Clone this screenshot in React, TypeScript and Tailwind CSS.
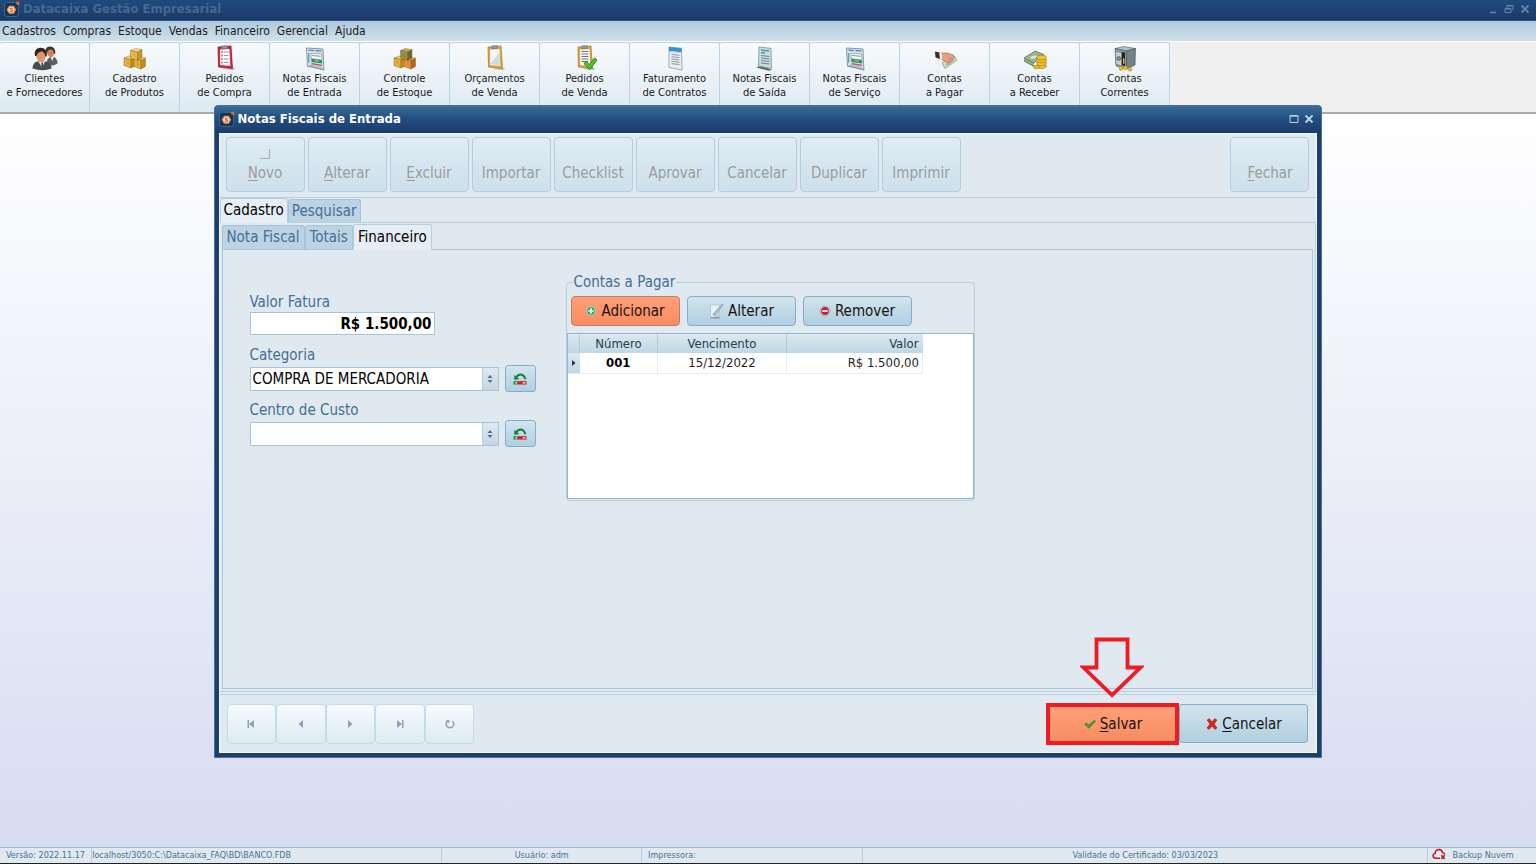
import type { ReactNode } from "react";

/* ---------- toolbar drawings (28 x 28) ---------- */

function PeopleIcon() {
  return (
    <>
      <path d="M15 20 Q16 14 19.500 13 L23 13 Q26.500 14.500 26.500 19.500 Q22 22.500 16 21.500Z" fill="#5d6063" />
      <path d="M19.500 13 L21.200 17 L22.800 13Z" fill="#f2f2f2" />
      <path d="M15.500 7.500 Q15.500 3.500 19.500 3.500 Q23.500 3.500 23.200 8 Q23 12.500 20 13.500 Q16.500 12.500 15.500 7.500Z" fill="#cf8259" />
      <path d="M14.800 8.500 Q13.500 3 19 2.500 Q24.800 2.500 24.200 10 L22.800 9.500 Q22.500 6 20.500 5.500 Q17 5 16 8.500Z" fill="#3a3330" />
      <path d="M1.500 24.500 Q2 18.500 6 17.500 L14.500 17.500 Q20.500 19 20.500 24.500 Q12 28 1.500 24.500Z" fill="#4a4d50" />
      <path d="M7.500 17.500 L11 23.500 L14 17.500Z" fill="#f6f6f6" />
      <path d="M10.300 18.500 L12 18.500 L12 24.500 L10.600 24Z" fill="#2f4a70" />
      <path d="M4.800 11 Q4.800 5.500 9.800 5.500 Q15 5.500 14.800 11.500 Q14.500 17 10.500 18.500 Q6 17.500 4.800 11Z" fill="#e09468" />
      <path d="M4 12 Q2.500 4.500 9 3.800 Q16.500 3.500 15.800 12.800 L14.300 12 Q14 8.500 11.500 7.500 Q7 7 5.400 12Z" fill="#2a2523" />
    </>
  );
}

function Cube({ x, y, top, left, right }: { x: number; y: number; top: string; left: string; right: string }) {
  return (
    <g transform={`translate(${x} ${y})`} stroke="#7d5a10" strokeWidth="0.4">
      <path d="M0 2 L5 0 L11.500 1.200 L7 3.500Z" fill={top} />
      <path d="M0 2 L7 3.500 L7 12 L0 9.500Z" fill={left} />
      <path d="M7 3.500 L11.500 1.200 L11.500 9.500 L7 12Z" fill={right} />
      <path d="M1.200 3.600 L5.800 4.600 L5.800 10.200 L1.200 8.600Z" fill="none" stroke={top} />
    </g>
  );
}

function BoxesIcon() {
  return (
    <>
      <Cube x={3} y={12} top="#f6d77a" left="#dba52e" right="#c48d20" />
      <Cube x={13} y={13} top="#f6d77a" left="#dba52e" right="#c48d20" />
      <Cube x={9.5} y={4.500} top="#f8df90" left="#e2b03a" right="#c9962a" />
    </>
  );
}

function StockIcon() {
  return (
    <>
      <Cube x={3} y={12} top="#f3cf6a" left="#dba52e" right="#c48d20" />
      <Cube x={13} y={13} top="#efae6b" left="#de8a38" right="#bb631a" />
      <Cube x={9.5} y={4.500} top="#b5ad6a" left="#8f8742" right="#6d662d" />
    </>
  );
}

function Clipboard({ frame, edge, children }: { frame: string; edge: string; children?: ReactNode }) {
  return (
    <>
      <path d="M11 25 L23 26.200 L24 24.500 L20 23Z" fill="#a9adb0" opacity="0.7" />
      <path d="M7 3 L20 2 L21.500 24.500 L7.500 23Z" fill={frame} stroke={edge} strokeWidth="0.7" />
      <path d="M9 5.500 L18.400 5 L19.400 22 L9.200 21Z" fill="#f3f7f9" />
      <path d="M11 1.800 L16 1.500 L16.800 4.600 L10.600 4.900Z" fill="#8e979d" stroke="#5f666b" strokeWidth="0.400" />
      {children}
    </>
  );
}

function PurchaseOrderIcon() {
  return (
    <Clipboard frame="#d3263a" edge="#98101f">
      {[8, 11.5, 15, 18.5].map((y) => (
        <g key={y}>
          <rect x="10.200" y={y - 0.8} width="1.800" height="1.600" fill="#df5a67" />
          <path d={`M13 ${y} H17.500`} stroke="#8b8f96" strokeWidth="0.900" />
        </g>
      ))}
    </Clipboard>
  );
}

function BudgetIcon() {
  return (
    <Clipboard frame="#e0a63b" edge="#a8741a">
      <path d="M9.200 20 L18.500 8 L19.200 21.500Z" fill="#cfdce3" />
    </Clipboard>
  );
}

function SalesOrderIcon() {
  return (
    <Clipboard frame="#e0a63b" edge="#a8741a">
      {[7.5, 10, 12.5, 15, 17.5].map((y) => (
        <path key={y} d={`M10.400 ${y} H17.300`} stroke="#6f777d" strokeWidth="1" />
      ))}
      <path d="M13 19.500 L15.500 17.500 L18.300 20.500 L23.500 14 L26 16 L18.500 25.500Z" fill="#4cc629" stroke="#1f7d10" strokeWidth="0.900" />
    </Clipboard>
  );
}

function InvoiceIcon() {
  return (
    <>
      <path d="M6 22.500 L23 26.500 L23.500 25 L8 21Z" fill="#8e979d" />
      <path d="M5.500 4 L22 5 L22.800 25.500 L6.500 21.800Z" fill="#d3e1e9" stroke="#7b929f" strokeWidth="0.900" />
      <path d="M7.500 6.200 L13 6.500 M14.500 6.600 L20.500 7" stroke="#4f7fa6" strokeWidth="1.200" />
      <path d="M7.700 9 V18.500" stroke="#6fa0c0" strokeWidth="1.400" />
      <path d="M10 9.300 L20.500 10 L21 16 L10.300 14.600Z" fill="#f6f8f9" stroke="#6c7a85" strokeWidth="0.500" />
      <path d="M11 11.500 L19.500 12.300" stroke="#7b8a95" strokeWidth="0.900" />
      <path d="M10.300 14.800 L21 16.200 L21.200 19.600 L10.500 18Z" fill="#279553" />
      <path d="M13.500 16.600 L18 17.300" stroke="#9fdab6" strokeWidth="0.900" />
      <path d="M10.600 19.600 L21 21.400" stroke="#cf4646" strokeWidth="1.300" />
      <path d="M9 21 L20.500 23.500" stroke="#89a1ae" strokeWidth="0.800" />
    </>
  );
}

function ContractIcon() {
  return (
    <>
      <path d="M8 3 L20.500 4.300 L21 26 L8 23.500Z" fill="#e9eef2" stroke="#8d98a1" strokeWidth="0.800" />
      <path d="M8 3 L20.500 4.300 L20.600 8.200 L8 7Z" fill="#2f95d3" />
      <path d="M8.400 7.600 L20.300 8.800" stroke="#9ed0ee" strokeWidth="0.800" />
      {[10.5, 12.8, 15.1, 17.4, 19.7].map((y) => (
        <path key={y} d={`M10.500 ${y} L18.500 ${y + 0.8}`} stroke="#8e98a2" strokeWidth="1" />
      ))}
    </>
  );
}

function OutgoingInvoiceIcon() {
  return (
    <>
      <path d="M5 23.500 L18 26.800 L21 25.500 L9 22Z" fill="#5e666b" />
      <path d="M8 3 L20 4.400 L20.500 24.300 L7.500 22Z" fill="#c9dce0" stroke="#78909a" strokeWidth="0.800" />
      <path d="M10 6 L18 7 M10 8.500 L14 9" stroke="#3e9a8e" strokeWidth="1.300" />
      {[11.5, 14, 16.5, 19].map((y) => (
        <path key={y} d={`M10 ${y} L18.500 ${y + 1}`} stroke="#6e8b95" strokeWidth="1" />
      ))}
    </>
  );
}

function PayIcon() {
  return (
    <>
      <path d="M11 19 L22 10.500 L26 16 L14 24.500Z" fill="#cddcca" stroke="#79917a" strokeWidth="0.700" />
      <path d="M14.500 20 L22 14 L23.500 16.500 L16 22Z" fill="#a3b9a2" />
      <path d="M9 9 L16 9 Q21 9.500 23.500 13.500 L21.500 15.500 L17.500 14 L20 18 Q18 19.500 15.500 18 L10 15Z" fill="#e6a27e" stroke="#a9603c" strokeWidth="0.600" />
      <path d="M4 7.500 L8.500 8.500 L9 15 L4.500 13.500Z" fill="#35302e" />
      <path d="M8.500 8.500 L10.500 8.800 L11 15.300 L9 14.800Z" fill="#f4f4f4" />
    </>
  );
}

function ReceiveIcon() {
  return (
    <>
      <path d="M3 14 L14 7 L23 10.500 L13 19Z" fill="#9db394" stroke="#4f6a4b" strokeWidth="0.700" />
      <path d="M3 14 L13 19 L13 23 L3 17.500Z" fill="#70896a" />
      <path d="M9 13.500 Q13 10.500 17 12.200 Q14.500 15 10.500 15.200Z" fill="#dbe6d5" />
      <path d="M3.200 15.500 L13 20.700" stroke="#cfdcca" strokeWidth="0.700" />
      {[22, 19.2, 16.4, 13.6].map((y) => (
        <ellipse key={y} cx="20.500" cy={y} rx="4.800" ry="2.400" fill="#f2c230" stroke="#a67a0d" strokeWidth="0.700" />
      ))}
      <ellipse cx="15.500" cy="23" rx="3" ry="1.800" fill="#e8b92b" stroke="#a67a0d" strokeWidth="0.600" />
    </>
  );
}

function SafeIcon() {
  return (
    <>
      <path d="M4 4.500 L13 2.500 L24.500 4.500 L15.500 7Z" fill="#b4c0c7" stroke="#505a60" strokeWidth="0.600" />
      <path d="M4 4.500 L15.500 7 L15.500 25 L5 22Z" fill="#8c999f" stroke="#505a60" strokeWidth="0.600" />
      <path d="M15.500 7 L24.500 4.500 L24 21 L15.500 25Z" fill="#75828a" stroke="#3f484d" strokeWidth="0.600" />
      <path d="M10.500 8 L14 8.600 L14 22 L10.500 21Z" fill="#1d1f20" />
      <path d="M12 14 L13.500 14.500 L13.500 20 L12 19.500Z" fill="#e8b92b" />
      <path d="M4.500 7.500 L10.500 8.500 L10.500 22 L5 20Z" fill="#c5d0d6" stroke="#5d686e" strokeWidth="0.500" />
      <circle cx="7.700" cy="14.500" r="1.900" fill="#8a979e" stroke="#48525a" strokeWidth="0.700" />
      <circle cx="10" cy="24.500" r="1.900" fill="#f0c030" stroke="#a67a0d" strokeWidth="0.500" />
      <circle cx="14.500" cy="23.800" r="1.900" fill="#f0c030" stroke="#a67a0d" strokeWidth="0.500" />
      <circle cx="19" cy="25.200" r="1.900" fill="#f0c030" stroke="#a67a0d" strokeWidth="0.500" />
    </>
  );
}

/* ---------- small drawings ---------- */

function AppLogo() {
  return (
    <svg viewBox="0 0 16 16" className="h-4 w-4 shrink-0" aria-hidden="true">
      <rect x="0.500" y="1.500" width="14" height="14" rx="2.500" fill="#123656" stroke="#3d6684" />
      <path d="M11.800 1 L15.500 0.500 L15 4.200 L12.400 3.600Z" fill="#e2622a" />
      <path d="M5 4.800 L9.800 4.800 L12.200 8.800 L9.800 12.800 L5 12.800 L2.600 8.800Z" fill="#f08a52" />
      <circle cx="7.400" cy="8.800" r="3" fill="#fbe3d3" />
      <path d="M8.900 7.600 Q7.400 6.400 6.300 7.500 Q6 8.600 7.400 8.800 Q8.900 9.100 8.500 10.100 Q7.300 11.200 5.900 10" fill="none" stroke="#e2622a" strokeWidth="1.100" />
    </svg>
  );
}

function PlusIcon() {
  return (
    <svg viewBox="0 0 12 12" className="h-3 w-3" aria-hidden="true">
      <circle cx="6" cy="6" r="5" fill="#e3e7e2" stroke="#a2a79f" strokeWidth="0.800" />
      <circle cx="6" cy="6" r="3.900" fill="#3fa648" />
      <path d="M6 3.200 V8.800 M3.200 6 H8.800" stroke="#fff" strokeWidth="1.700" />
    </svg>
  );
}

function MinusIcon() {
  return (
    <svg viewBox="0 0 12 12" className="h-3 w-3" aria-hidden="true">
      <circle cx="6" cy="6" r="5" fill="#d9dfe3" stroke="#98a3aa" strokeWidth="0.800" />
      <circle cx="6" cy="6" r="3.900" fill="#cc1f3d" />
      <path d="M3.300 6 H8.700" stroke="#fff" strokeWidth="1.700" />
    </svg>
  );
}

function EditIcon() {
  return (
    <svg viewBox="0 0 16 16" className="h-4 w-4" aria-hidden="true">
      <path d="M2.500 2 H11.500 V14.500 H2.500Z" fill="#e8f1f5" stroke="#a5b8c2" strokeWidth="0.600" />
      <path d="M5 14.500 L11.500 6 V14.500Z" fill="#bfced6" />
      <path d="M2.500 14.800 H11.800" stroke="#6f838e" />
      <path d="M14 1.200 L15.200 2.200 L7 11.500 L5 12.500 L5.700 10.400Z" fill="#b5c3cb" stroke="#7b8c96" strokeWidth="0.600" />
    </svg>
  );
}

function SwapIcon() {
  return (
    <svg viewBox="0 0 14 14" className="h-3.5 w-3.5" aria-hidden="true">
      <path d="M2.800 6 Q4.500 2.600 8 2.600 Q11 3 12.400 7.200" fill="none" stroke="#15803a" strokeWidth="2" />
      <path d="M1.200 3 L1.300 7.800 L6.500 7.300Z" fill="#15803a" />
      <rect x="0.500" y="9.200" width="4" height="3.300" fill="#1f8a35" />
      <rect x="4.500" y="9.200" width="9" height="3.300" fill="#c91f1f" />
      <rect x="9.500" y="10.200" width="3" height="1.300" fill="#f4d9d9" />
      <rect x="2" y="10.200" width="2" height="1.300" fill="#bfe5c5" />
    </svg>
  );
}

function CheckIcon() {
  return (
    <svg viewBox="0 0 12 12" className="h-3 w-3" aria-hidden="true">
      <path d="M0.800 6.200 L2.800 5.200 L4.600 7.200 L10.400 2.400 L11.400 3.200 L4.800 10.200Z" fill="#3fae2f" stroke="#1d6e16" strokeWidth="0.700" />
    </svg>
  );
}

function CrossIcon() {
  return (
    <svg viewBox="0 0 12 12" className="h-3 w-3" aria-hidden="true">
      <path d="M1.200 2 L3.400 0.800 L6 4 L8.800 0.800 L10.800 2 L8 6 L11 10 L8.800 11.200 L6 8 L3.200 11.200 L1 10 L4 6Z" fill="#e02410" stroke="#8d1208" strokeWidth="0.600" />
    </svg>
  );
}

function CloudErrorIcon() {
  return (
    <svg viewBox="0 0 14 12" className="-mt-1 h-3 w-3.5" aria-hidden="true">
      <path d="M8 10.200 H3.200 Q1 10 1 7.600 Q1.200 5.600 3.200 5.300 Q3.600 1.600 7 1.500 Q10 1.600 10.600 4.800 Q12.500 5 12.800 6.600" fill="none" stroke="#c4161c" strokeWidth="1.500" />
      <path d="M9.300 7.300 L12.700 10.900 M12.700 7.300 L9.300 10.900" stroke="#c4161c" strokeWidth="1.600" />
    </svg>
  );
}

function NavGlyph({ d }: { d: string }) {
  return (
    <svg viewBox="0 0 10 10" className="h-2.5 w-2.5" aria-hidden="true">
      <path d={d} fill="#8fa3b8" />
    </svg>
  );
}

function RefreshGlyph() {
  return (
    <svg viewBox="0 0 10 10" className="h-2.5 w-2.5" aria-hidden="true">
      <path d="M7.400 2.200 Q9.600 4.200 8.300 6.800 Q7 8.800 4.800 8.700 Q2.200 8.600 1.300 6 Q0.900 3.600 2.600 2.200" fill="none" stroke="#8fa3b8" strokeWidth="1.500" />
      <path d="M0.800 1 H4.400 V4.400Z" fill="#8fa3b8" />
    </svg>
  );
}

/* ---------- data ---------- */

const menus = ["Cadastros", "Compras", "Estoque", "Vendas", "Financeiro", "Gerencial", "Ajuda"];

const shortcuts: { lines: [string, string]; icon: ReactNode }[] = [
  { lines: ["Clientes", "e Fornecedores"], icon: <PeopleIcon /> },
  { lines: ["Cadastro", "de Produtos"], icon: <BoxesIcon /> },
  { lines: ["Pedidos", "de Compra"], icon: <PurchaseOrderIcon /> },
  { lines: ["Notas Fiscais", "de Entrada"], icon: <InvoiceIcon /> },
  { lines: ["Controle", "de Estoque"], icon: <StockIcon /> },
  { lines: ["Orçamentos", "de Venda"], icon: <BudgetIcon /> },
  { lines: ["Pedidos", "de Venda"], icon: <SalesOrderIcon /> },
  { lines: ["Faturamento", "de Contratos"], icon: <ContractIcon /> },
  { lines: ["Notas Fiscais", "de Saída"], icon: <OutgoingInvoiceIcon /> },
  { lines: ["Notas Fiscais", "de Serviço"], icon: <InvoiceIcon /> },
  { lines: ["Contas", "a Pagar"], icon: <PayIcon /> },
  { lines: ["Contas", "a Receber"], icon: <ReceiveIcon /> },
  { lines: ["Contas", "Correntes"], icon: <SafeIcon /> },
];

const actions: { label: string; key: boolean }[] = [
  { label: "Novo", key: true },
  { label: "Alterar", key: true },
  { label: "Excluir", key: true },
  { label: "Importar", key: false },
  { label: "Checklist", key: false },
  { label: "Aprovar", key: false },
  { label: "Cancelar", key: false },
  { label: "Duplicar", key: false },
  { label: "Imprimir", key: false },
];

const navButtons: { name: string; glyph: ReactNode }[] = [
  { name: "Primeiro", glyph: <NavGlyph d="M1.500 1 H3 V9 H1.500Z M8 1 V9 L3 5Z" /> },
  { name: "Anterior", glyph: <NavGlyph d="M7 1 V9 L2.500 5Z" /> },
  { name: "Próximo", glyph: <NavGlyph d="M3 1 V9 L7.500 5Z" /> },
  { name: "Último", glyph: <NavGlyph d="M7 1 H8.500 V9 H7Z M2 1 V9 L7 5Z" /> },
  { name: "Atualizar", glyph: <RefreshGlyph /> },
];

/* ---------- pieces ---------- */

function AccessLabel({ text, underline }: { text: string; underline: boolean }) {
  if (!underline) return <span>{text}</span>;
  return (
    <span>
      <span className="underline underline-offset-2">{text[0]}</span>
      {text.slice(1)}
    </span>
  );
}

function ActionButton({ label, underline, children }: { label: string; underline: boolean; children?: ReactNode }) {
  return (
    <button
      type="button"
      disabled
      className="flex h-[55px] w-[79px] flex-col items-center justify-end rounded-[4px] border border-[#b3cede] bg-gradient-to-b from-[#dfecf3] to-[#cde0ec] pb-2 text-[15px] leading-5 text-[#9a9c9e]"
    >
      {children}
      <AccessLabel text={label} underline={underline} />
    </button>
  );
}

function GridButton({ label, primary, children }: { label: string; primary?: boolean; children: ReactNode }) {
  return (
    <button
      type="button"
      className={
        primary
          ? "flex h-[30px] w-[109px] items-center justify-center gap-1 rounded-[4px] border border-[#b9806c] bg-gradient-to-b from-[#ff9f78] to-[#fb8b60] text-[15px] leading-5 text-[#141414]"
          : "flex h-[30px] w-[109px] items-center justify-center gap-1 rounded-[4px] border border-[#84add0] bg-gradient-to-b from-[#d3e4ee] to-[#b0cfe0] text-[15px] leading-5 text-[#141414]"
      }
    >
      {children}
      <span>{label}</span>
    </button>
  );
}

function ComboField({ id, label, value }: { id: string; label: string; value: string }) {
  return (
    <div>
      <label htmlFor={id} className="block text-[15px] leading-[19px] text-[#426f97]">
        {label}
      </label>
      <div className="flex items-center gap-1.5">
        <div className="relative w-[249px]">
          <select
            id={id}
            defaultValue={value}
            className="block h-6 w-full appearance-none border border-[#a5c5dc] bg-white pl-0.5 text-[15px] leading-5 text-black"
          >
            <option>{value}</option>
          </select>
          <span className="pointer-events-none absolute inset-y-px right-px flex w-4 items-center justify-center border-l border-[#b8cfdf] bg-gradient-to-b from-[#dfe9f0] to-[#c6d6e2]">
            <svg viewBox="0 0 6 8" className="h-2 w-1.5" aria-hidden="true">
              <path d="M3 0 L5.500 3 H0.500Z M3 8 L5.500 5 H0.500Z" fill="#3f72a0" />
            </svg>
          </span>
        </div>
        <button
          type="button"
          aria-label={`Limpar ${label}`}
          className="flex h-[27px] w-[31px] items-center justify-center rounded-[3px] border border-[#84add0] bg-gradient-to-b from-[#d3e4ee] to-[#b0cfe0]"
        >
          <SwapIcon />
        </button>
      </div>
    </div>
  );
}

function WindowControls({ full, color }: { full: boolean; color: string }) {
  return (
    <div className={full ? "flex items-center gap-1.5 pr-1.5" : "flex items-center gap-[5px] pr-[3px]"}>
      {full && (
        <button type="button" aria-label="Minimizar">
          <svg viewBox="0 0 10 10" className="h-2.5 w-2.5" aria-hidden="true">
            <path d="M2 8.500 H8" stroke={color} strokeWidth="1.500" />
          </svg>
        </button>
      )}
      <button type="button" aria-label={full ? "Restaurar" : "Maximizar"}>
        <svg viewBox="0 0 10 10" className="h-2.5 w-2.5" aria-hidden="true">
          {full ? (
            <path d="M1 4.500 H7 V8.500 H1Z M1 5 H7 M3 4 V1.500 H9 V5.500 H7.500 M3 2 H9" fill="none" stroke={color} />
          ) : (
            <path d="M1 1.500 H9 V8.500 H1Z M1 2.200 H9" fill="none" stroke={color} />
          )}
        </svg>
      </button>
      <button type="button" aria-label="Fechar janela">
        <svg viewBox="0 0 10 10" className="h-2.5 w-2.5" aria-hidden="true">
          <path d="M1.500 1.500 L8.500 8.500 M8.500 1.500 L1.500 8.500" stroke={color} strokeWidth="1.900" />
        </svg>
      </button>
    </div>
  );
}

function PayablesBox() {
  return (
    <fieldset className="ml-[30px] mt-[22px] w-[409px] min-w-0 rounded-[4px] border border-[#b5cfe1] pb-px">
      <legend className="ml-1.5 px-px text-[15px] leading-5 text-[#426f97]">Contas a Pagar</legend>
      <div className="flex h-[41px] gap-[7px] pl-1 pt-1">
        <GridButton label="Adicionar" primary>
          <PlusIcon />
        </GridButton>
        <GridButton label="Alterar">
          <EditIcon />
        </GridButton>
        <GridButton label="Remover">
          <MinusIcon />
        </GridButton>
      </div>
      <div className="h-[166px] border border-[#8fb6d3] bg-white">
        <table className="w-[355px] table-fixed border-collapse text-[13px] leading-[18px] text-[#1f1f1f]">
          <colgroup>
            <col className="w-3" />
            <col className="w-[78px]" />
            <col className="w-[129px]" />
            <col className="w-[136px]" />
          </colgroup>
          <thead>
            <tr className="h-[19px] bg-gradient-to-b from-[#dbe8f0] to-[#bfd7e5] text-[#2a3b49]">
              <th className="border-r border-[#b0cadb] p-0" aria-label="Linha atual" />
              <th className="border-r border-[#b0cadb] p-0 text-center font-normal">Número</th>
              <th className="border-r border-[#b0cadb] p-0 text-center font-normal">Vencimento</th>
              <th className="p-0 pr-1 text-right font-normal">Valor</th>
            </tr>
          </thead>
          <tbody>
            <tr className="h-5 border-b border-[#e2edf4]">
              <td className="bg-gradient-to-b from-[#dbe8f0] to-[#bfd7e5] p-0">
                <svg viewBox="0 0 4 6" className="mx-auto h-1.5 w-1" aria-hidden="true">
                  <path d="M0 0 L3.500 3 L0 6Z" fill="#123a63" />
                </svg>
              </td>
              <td className="border-r border-[#e2edf4] p-0 text-center font-bold text-black">001</td>
              <td className="border-r border-[#e2edf4] p-0 text-center">15/12/2022</td>
              <td className="border-r border-[#e2edf4] p-0 pr-[3px] text-right">R$ 1.500,00</td>
            </tr>
          </tbody>
        </table>
      </div>
    </fieldset>
  );
}

function InvoiceWindow() {
  return (
    <section
      aria-label="Notas Fiscais de Entrada"
      className="-mt-[9px] flex w-[72.2%] flex-col rounded-t-[4px] border border-[#4d7299] bg-[#1b3f6f] px-1 pb-1"
    >
      <header className="-mx-1 flex h-[27px] items-center justify-between rounded-t-[3px] bg-gradient-to-b from-[#3a6d99] via-[#234c7f] to-[#1b3c6b] px-1 pb-0.5">
        <div className="flex items-center gap-[3px]">
          <AppLogo />
          <h2 className="text-[13px] font-bold leading-4 text-white">Notas Fiscais de Entrada</h2>
        </div>
        <WindowControls full={false} color="#b9d3e5" />
      </header>

      <div className="flex flex-1 flex-col border border-[#f3f7fa] bg-[#e1e9f0]">
        <div className="flex justify-between border-b border-[#b5cfe1] pb-[5px] pl-1.5 pr-[7px] pt-[3px]">
          <div className="flex gap-[3px]">
            {actions.map((a) => (
              <ActionButton key={a.label} label={a.label} underline={a.key}>
                {a.label === "Novo" && <span className="mb-1 h-2.5 w-2.5 border-b border-r border-[#a9adb0]" />}
              </ActionButton>
            ))}
          </div>
          <ActionButton label="Fechar" underline />
        </div>

        <div className="flex h-[25px] items-end border-b border-[#b5cfe1] text-[15px] leading-5" role="tablist">
          <button type="button" role="tab" aria-selected="true" className="z-10 -mb-px h-[25px] rounded-t-[3px] border border-b-0 border-[#b5cfe1] bg-[#e6edf4] px-[3px] pb-0.5 text-black">
            Cadastro
          </button>
          <button type="button" role="tab" aria-selected="false" className="h-[23px] rounded-t-[3px] border border-b-0 border-[#a3c4da] bg-[#bdd3e2] px-[3px] pb-px text-[#426f97]">
            Pesquisar
          </button>
        </div>

        <div className="flex flex-1 flex-col border-b border-r border-[#b5cfe1] pb-0.5 pl-0.5 pt-[2px]">
          <div className="flex h-6 items-end text-[15px] leading-5" role="tablist">
            <button type="button" role="tab" aria-selected="false" className="h-6 rounded-t-[3px] border border-b-0 border-[#a3c4da] bg-[#bdd3e2] px-1 pb-px text-[#426f97]">
              Nota Fiscal
            </button>
            <button type="button" role="tab" aria-selected="false" className="h-6 rounded-t-[3px] border border-b-0 border-[#a3c4da] bg-[#bdd3e2] px-1 pb-px text-[#426f97]">
              Totais
            </button>
            <button type="button" role="tab" aria-selected="true" className="z-10 -mb-px h-[26px] rounded-t-[3px] border border-b-0 border-[#b5cfe1] bg-[#e6edf4] px-1 pb-0.5 text-black">
              Financeiro
            </button>
          </div>

          <div className="mr-0.5 flex flex-1 items-start border border-[#a9c6db] pl-[27px]">
            <div className="pt-[43px]">
              <label htmlFor="valor" className="block text-[15px] leading-[19px] text-[#426f97]">
                Valor Fatura
              </label>
              <input
                id="valor"
                defaultValue="R$ 1.500,00"
                className="block h-[23px] w-[185px] border border-[#a5c5dc] bg-white pr-0.5 text-right text-[15px] font-bold leading-5 text-black"
              />
              <div className="flex flex-col gap-[9px] pt-[11px]">
                <ComboField id="categoria" label="Categoria" value="COMPRA DE MERCADORIA" />
                <ComboField id="centro" label="Centro de Custo" value="" />
              </div>
            </div>
            <PayablesBox />
          </div>
        </div>

        <footer className="mt-0.5 flex items-start justify-between border-t border-[#b5cfe1] pb-[7px] pl-[7px] pr-2 pt-[9px]">
          <div className="flex w-[248px]">
            {navButtons.map((b) => (
              <button
                key={b.name}
                type="button"
                disabled
                aria-label={b.name}
                className="flex h-10 flex-1 items-center justify-center rounded-[4px] border border-[#c3dcea] bg-gradient-to-b from-[#f7fafc] to-[#dcebf2]"
              >
                {b.glyph}
              </button>
            ))}
          </div>
          <div className="flex">
            <div className="relative">
              <button
                type="button"
                className="-mt-px flex h-[42px] w-[133px] items-center justify-center gap-1 border-4 border-[#ed1c24] bg-gradient-to-b from-[#ff9f78] to-[#f88d61] text-[15px] leading-5 text-[#141414]"
              >
                <CheckIcon />
                <AccessLabel text="Salvar" underline />
              </button>
              <svg viewBox="0 0 64 61" className="absolute bottom-full left-[34px] mb-1.5 h-[61px] w-16" aria-hidden="true">
                <path d="M16.500 2.500 H47.500 V30.500 H60.500 L32 58 L3.500 30.500 H16.500Z" fill="none" stroke="#ed1c24" strokeWidth="3.800" />
              </svg>
            </div>
            <button
              type="button"
              className="flex h-[39px] w-[129px] items-center justify-center gap-1 rounded-[3px] border border-[#84add0] bg-gradient-to-b from-[#d3e4ee] to-[#b0cfe0] text-[15px] leading-5 text-[#141414]"
            >
              <CrossIcon />
              <AccessLabel text="Cancelar" underline />
            </button>
          </div>
        </footer>
      </div>
    </section>
  );
}

export default function App() {
  return (
    <div className="flex min-h-screen flex-col font-['DejaVu_Sans_Condensed','Noto_Sans',sans-serif]">
      <header className="flex h-[21px] items-center justify-between border-b border-[#2d5583] bg-gradient-to-b from-[#204a7c] to-[#1b3a69] pb-0.5 pl-1">
        <div className="flex items-center gap-[3px]">
          <AppLogo />
          <h1 className="text-[13px] font-bold leading-4 text-[#426a92]">Datacaixa Gestão Empresarial</h1>
        </div>
        <WindowControls full color="#5f87ab" />
      </header>

      <nav className="flex h-[21px] items-center gap-[7px] border-b border-white bg-gradient-to-b from-[#adc9dc] to-[#cfe0eb] pl-0.5 text-[12px] leading-4 text-[#1c1c1c]">
        {menus.map((m) => (
          <button key={m} type="button">
            {m}
          </button>
        ))}
      </nav>

      <div className="flex h-[72px] border-b-2 border-[#a9a9a9] bg-[#f0f0f0]">
        {shortcuts.map((s) => (
          <button
            key={s.lines.join(" ")}
            type="button"
            className="flex w-[90px] flex-col items-center whitespace-nowrap rounded-t-[3px] border-r border-t border-[#b9d5e5] bg-gradient-to-b from-[#f8fafb] to-[#ddeaf2] pt-px text-[11px] leading-[14px] text-[#1a1a1a]"
          >
            <svg viewBox="0 0 28 28" className="h-7 w-7 shrink-0" aria-hidden="true">
              {s.icon}
            </svg>
            <span>{s.lines[0]}</span>
            <span>{s.lines[1]}</span>
          </button>
        ))}
      </div>

      <main className="flex flex-1 justify-center bg-gradient-to-b from-white to-[#d7dcf1] pb-[89px]">
        <InvoiceWindow />
      </main>

      <footer className="flex h-[17px] items-center border-b border-t border-b-[#222] border-t-[#9db9d3] bg-[#e1e9f0] text-[9px] leading-[15px] text-[#4a7095]">
        <span className="w-[6%] border-r border-[#b5cfe1] pl-1.5">Versão: 2022.11.17</span>
        <span className="w-[22.8%] border-r border-[#b5cfe1]">localhost/3050:C:\Datacaixa_FAQ\BD\BANCO.FDB</span>
        <span className="w-[13%] border-r border-[#b5cfe1] text-center">Usuário: adm</span>
        <span className="w-[14.4%] border-r border-[#b5cfe1] pl-1.5">Impressora:</span>
        <span className="flex-1 border-r border-[#b5cfe1] text-center">Validade do Certificado: 03/03/2023</span>
        <span className="flex w-[7%] items-center gap-1.5 pl-1">
          <CloudErrorIcon />
          Backup Nuvem
        </span>
      </footer>
    </div>
  );
}
